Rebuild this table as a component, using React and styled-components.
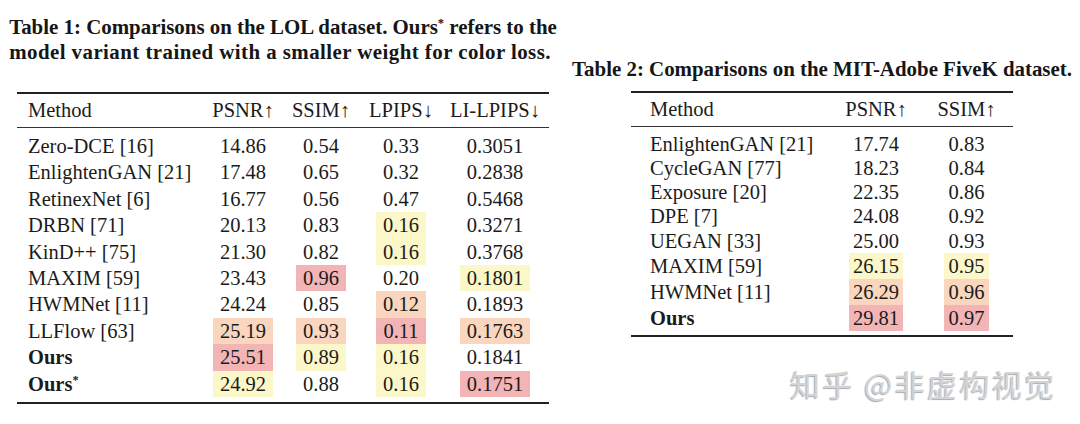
import styled, { createGlobalStyle } from "styled-components";

const GlobalStyle = createGlobalStyle`
  html, body {
    margin: 0;
    padding: 0;
    background: #ffffff;
  }
  body {
    font-family: "Liberation Serif", "Times New Roman", serif;
    color: #1b1b1b;
  }
`;

const tones = {
  yellow: "#fcf7c9",
  peach: "#f9d6bd",
  pink: "#f3b4b6",
};

const Page = styled.div`
  position: relative;
  display: flex;
  width: 1080px;
  height: 424px;
  overflow: hidden;
  background: #fff;
`;

const Section = styled.section`
  display: flex;
  flex-direction: column;
  align-items: center;
  width: ${(p) => p.width}px;
  padding-top: ${(p) => p.top}px;
`;

const Caption = styled.h2`
  margin: 0 0 ${(p) => p.gap}px;
  font-size: 20.9px;
  line-height: 25px;
  font-weight: bold;
  white-space: nowrap;
  color: #161616;
`;

const CaptionLine = styled.span`
  display: block;
  letter-spacing: ${(p) => p.spacing || 0}px;
`;

const Sup = styled.sup`
  font-size: 0.6em;
  vertical-align: 0.55em;
  line-height: 0;
`;

const Table = styled.div`
  width: ${(p) => p.width}px;
  border-top: 2px solid #222;
  border-bottom: 2px solid #222;
  font-size: 20.5px;
`;

const HeadRow = styled.div`
  display: grid;
  grid-template-columns: ${(p) => p.cols};
  align-items: center;
  height: 33px;
  border-bottom: 1px solid #333;
`;

const Body = styled.div`
  padding: 5px 0 4.5px;
`;

const Row = styled.div`
  display: grid;
  grid-template-columns: ${(p) => p.cols};
  align-items: center;
  line-height: ${(p) => p.lh}px;
`;

const MethodCell = styled.div`
  padding-left: ${(p) => p.indent}px;
  font-weight: ${(p) => (p.bold ? "bold" : "normal")};
  white-space: nowrap;
`;

const NumCell = styled.div`
  text-align: center;
  white-space: nowrap;
`;

const Mark = styled.span`
  display: inline-block;
  padding: 0 ${(p) => p.pad || 7}px;
  line-height: ${(p) => (p.lh ? `${p.lh}px` : "inherit")};
  background: ${(p) => (p.tone ? tones[p.tone] : "transparent")};
`;

const Watermark = styled.div`
  position: absolute;
  left: 790px;
  top: 361px;
  font-family: "Noto Sans CJK SC", "Noto Sans", sans-serif;
  font-size: 30px;
  letter-spacing: 2.4px;
  color: #d4d4d4;
  text-shadow: -1px 1px 1px rgba(70, 70, 70, 0.45);
  white-space: nowrap;
`;

const lolCols = "188px 76px 80px 80px 108px";
const lolRows = [
  ["Zero-DCE [16]", ["14.86"], ["0.54"], ["0.33"], ["0.3051"]],
  ["EnlightenGAN [21]", ["17.48"], ["0.65"], ["0.32"], ["0.2838"]],
  ["RetinexNet [6]", ["16.77"], ["0.56"], ["0.47"], ["0.5468"]],
  ["DRBN [71]", ["20.13"], ["0.83"], ["0.16", "yellow"], ["0.3271"]],
  ["KinD++ [75]", ["21.30"], ["0.82"], ["0.16", "yellow"], ["0.3768"]],
  ["MAXIM [59]", ["23.43"], ["0.96", "pink"], ["0.20"], ["0.1801", "yellow"]],
  ["HWMNet [11]", ["24.24"], ["0.85"], ["0.12", "peach"], ["0.1893"]],
  ["LLFlow [63]", ["25.19", "peach"], ["0.93", "peach"], ["0.11", "pink"], ["0.1763", "peach"]],
  ["Ours", ["25.51", "pink"], ["0.89", "yellow"], ["0.16", "yellow"], ["0.1841"], true],
  ["Ours*", ["24.92", "yellow"], ["0.88"], ["0.16", "yellow"], ["0.1751", "pink"], true],
];

const fiveKCols = "201px 88px 93px";
const fiveKRows = [
  ["EnlightenGAN [21]", ["17.74"], ["0.83"]],
  ["CycleGAN [77]", ["18.23"], ["0.84"]],
  ["Exposure [20]", ["22.35"], ["0.86"]],
  ["DPE [7]", ["24.08"], ["0.92"]],
  ["UEGAN [33]", ["25.00"], ["0.93"]],
  ["MAXIM [59]", ["26.15", "yellow"], ["0.95", "yellow"]],
  ["HWMNet [11]", ["26.29", "peach"], ["0.96", "peach"]],
  ["Ours", ["29.81", "pink"], ["0.97", "pink"], true],
];

function MethodName({ name }) {
  if (name.endsWith("*")) {
    return (
      <>
        {name.slice(0, -1)}
        <Sup>*</Sup>
      </>
    );
  }
  return name;
}

function App() {
  return (
    <Page>
      <GlobalStyle />

      <Section width={566} top={15}>
        <Caption gap={27}>
          <CaptionLine>
            Table 1: Comparisons on the LOL dataset. Ours<Sup>*</Sup> refers to the
          </CaptionLine>
          <CaptionLine spacing={0.45}>
            model variant trained with a smaller weight for color loss.
          </CaptionLine>
        </Caption>
        <Table width={532}>
          <HeadRow cols={lolCols}>
            <MethodCell indent={11}>Method</MethodCell>
            <NumCell>PSNR↑</NumCell>
            <NumCell>SSIM↑</NumCell>
            <NumCell>LPIPS↓</NumCell>
            <NumCell>LI-LPIPS↓</NumCell>
          </HeadRow>
          <Body>
            {lolRows.map(([name, ...rest]) => {
              const bold = rest[4] === true;
              const vals = rest.slice(0, 4);
              return (
                <Row key={name} cols={lolCols} lh={26.4}>
                  <MethodCell indent={11} bold={bold}>
                    <MethodName name={name} />
                  </MethodCell>
                  {vals.map(([v, tone], i) => (
                    <NumCell key={i}>
                      <Mark tone={tone}>{v}</Mark>
                    </NumCell>
                  ))}
                </Row>
              );
            })}
          </Body>
        </Table>
      </Section>

      <Section width={512} top={57}>
        <Caption gap={8.5}>
          Table 2: Comparisons on the MIT-Adobe FiveK dataset.
        </Caption>
        <Table width={382}>
          <HeadRow cols={fiveKCols}>
            <MethodCell indent={19}>Method</MethodCell>
            <NumCell>PSNR↑</NumCell>
            <NumCell>SSIM↑</NumCell>
          </HeadRow>
          <Body>
            {fiveKRows.map(([name, psnr, ssim, bold]) => (
              <Row key={name} cols={fiveKCols} lh={24.3}>
                <MethodCell indent={19} bold={bold}>
                  {name}
                </MethodCell>
                {[psnr, ssim].map(([v, tone], i) => (
                  <NumCell key={i}>
                    <Mark tone={tone} lh={tone ? 26 : undefined} pad={i === 1 ? 5 : 4}>
                      {v}
                    </Mark>
                  </NumCell>
                ))}
              </Row>
            ))}
          </Body>
        </Table>
      </Section>

      <Watermark>知乎 @非虚构视觉</Watermark>
    </Page>
  );
}

export default App;
